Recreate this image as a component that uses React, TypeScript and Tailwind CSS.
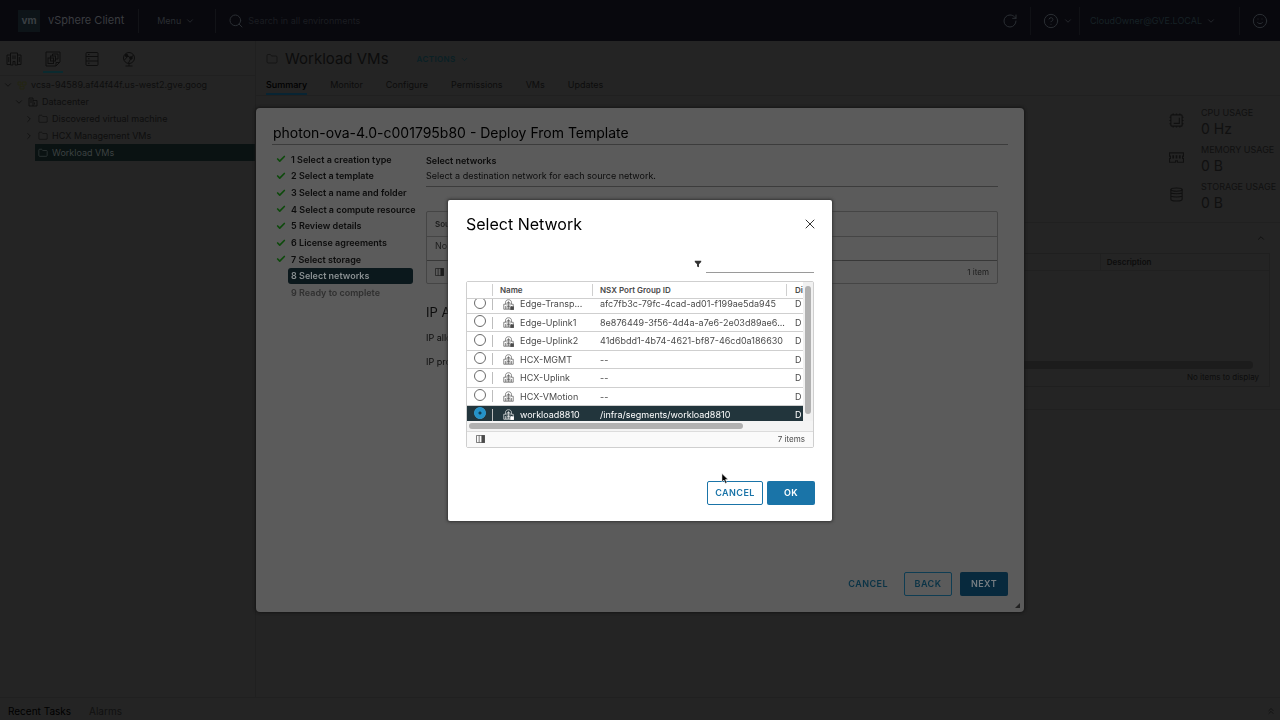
import { useLayoutEffect, useRef, useState } from "react";
import type { ReactNode } from "react";
import {
  Check,
  ChevronDown,
  ChevronRight,
  ChevronUp,
  ChevronsUp,
  CircleHelp,
  Folder,
  RotateCw,
  Search,
  Smile,
  X,
} from "lucide-react";

const steps = [
  "Select a creation type",
  "Select a template",
  "Select a name and folder",
  "Select a compute resource",
  "Review details",
  "License agreements",
  "Select storage",
  "Select networks",
  "Ready to complete",
];

const networks = [
  { name: "Edge-Transp...", id: "afc7fb3c-79fc-4cad-ad01-f199ae5da945", nsx: true },
  { name: "Edge-Uplink1", id: "8e876449-3f56-4d4a-a7e6-2e03d89ae6...", nsx: true },
  { name: "Edge-Uplink2", id: "41d6bdd1-4b74-4621-bf87-46cd0a186630", nsx: true },
  { name: "HCX-MGMT", id: "--", nsx: false },
  { name: "HCX-Uplink", id: "--", nsx: false },
  { name: "HCX-VMotion", id: "--", nsx: false },
  { name: "workload8810", id: "/infra/segments/workload8810", nsx: true },
];

const tabs = ["Summary", "Monitor", "Configure", "Permissions", "VMs", "Updates"];

function NetworkIcon({ nsx }: { nsx: boolean }) {
  return (
    <svg viewBox="0 0 22 22" className="size-[11px] shrink-0" fill="none" stroke="currentColor" strokeWidth="1.3" aria-hidden="true">
      <path d="M5 11V7C5 3.5 7.5 1.5 11 1.5S17 3.5 17 7V11" />
      <path d="M5 10.5H1.5V20.5H20.5V10.5H17" />
      <path d="M8 13V7.5H14V13M11 4.5V20M8 20V14.5H14V20M4.8 20V14M17.2 20V14" />
      {nsx && <path d="M15.5 15.5H21.5V21.5H15.5Z" fill="currentColor" />}
    </svg>
  );
}

function ColumnsIcon() {
  return (
    <svg viewBox="0 0 20 18" className="h-[8px] w-[9px]" fill="none" stroke="currentColor" strokeWidth="1.6" aria-hidden="true">
      <path d="M1 1H19V17H1ZM7 1V17" />
      <path d="M13 1H19V17H13Z" fill="currentColor" />
    </svg>
  );
}

function HostsIcon() {
  return (
    <svg viewBox="0 0 32 32" className="size-4" fill="none" stroke="currentColor" strokeWidth="2" aria-hidden="true">
      <path d="M9 4H23V28H18V21H14V28H9Z" />
      <path d="M9 8H2V27H9M23 8H30V27H23M5.5 12V22M26.5 12V22M14 9V16M18 9V16" />
    </svg>
  );
}

function VmsIcon() {
  return (
    <svg viewBox="0 0 32 32" className="size-4" fill="none" stroke="currentColor" strokeWidth="2" aria-hidden="true">
      <path d="M2 2H30V22L22 30H2Z" />
      <rect x="6" y="14" width="11" height="11" />
      <rect x="11" y="10" width="10" height="10" />
      <path d="M15 10V6H26V16H21M22 30V23H29" />
    </svg>
  );
}

function DatastoreIcon() {
  return (
    <svg viewBox="0 0 32 32" className="size-4" fill="none" stroke="currentColor" strokeWidth="2" aria-hidden="true">
      <rect x="4" y="3" width="24" height="26" rx="2" />
      <path d="M4 11H28M4 20H28M8 7H11M8 15.5H11M8 24.5H11" />
    </svg>
  );
}

function StorageIcon() {
  return (
    <svg viewBox="0 0 32 32" className="size-[15px]" fill="none" stroke="currentColor" strokeWidth="2.4" aria-hidden="true">
      <ellipse cx="16" cy="5.5" rx="12" ry="3.5" />
      <path d="M4 5.5V26C4 31 28 31 28 26V5.5M4 12.5C8 15 24 15 28 12.5M4 19.5C8 22 24 22 28 19.5" />
    </svg>
  );
}

function GlobeIcon() {
  return (
    <svg viewBox="0 0 32 32" className="size-4" fill="none" stroke="currentColor" strokeWidth="2" aria-hidden="true">
      <circle cx="16" cy="14" r="11" />
      <path d="M8 7L20 14L25 8M20 14L15 24M7 18L14 10M9 30H23M16 25V30" />
      <circle cx="20" cy="14" r="2.5" fill="currentColor" />
      <circle cx="11" cy="9" r="2.5" fill="currentColor" />
    </svg>
  );
}

function CpuIcon() {
  return (
    <svg viewBox="0 0 32 32" className="size-[15px]" fill="none" stroke="currentColor" strokeWidth="2.4" aria-hidden="true">
      <rect x="4" y="4" width="24" height="24" rx="2" />
      <path d="M22 10V22H10" />
      <path d="M9 1V4M16 1V4M23 1V4M9 28V31M16 28V31M23 28V31M1 9H4M1 16H4M1 23H4M28 9H31M28 16H31M28 23H31" />
    </svg>
  );
}

function MemoryIcon() {
  return (
    <svg viewBox="0 0 32 32" className="size-[15px]" fill="none" stroke="currentColor" strokeWidth="2.4" aria-hidden="true">
      <path d="M1 6H31V13H29V18H31V26H18V23H14V26H1V18H3V13H1Z" />
      <path d="M9 11V18M16 11V18M23 11V18" strokeWidth="3.5" />
    </svg>
  );
}

function TreeRow({ className, children }: { className: string; children: ReactNode }) {
  return <li className={`flex h-[17px] items-center gap-1 whitespace-nowrap ${className}`}>{children}</li>;
}

function TopBar() {
  return (
    <header className="flex h-[41px] shrink-0 items-center bg-[#08080d] text-[9px] text-[#2a2e33]">
      <div className="ml-[18px] grid size-[22px] place-items-center bg-[#0d1418] text-[10px] font-bold text-[#3a3f43]">vm</div>
      <span className="ml-2 text-[11px] text-[#3a3c40]">vSphere Client</span>
      <span className="ml-[14px] h-6 w-px bg-[#121317]" />
      <button type="button" className="ml-[18px] flex items-center gap-1">
        Menu <ChevronDown className="size-[10px]" />
      </button>
      <span className="ml-5 h-6 w-px bg-[#121317]" />
      <label className="ml-3 flex items-center gap-1">
        <Search className="size-4" strokeWidth={1.5} />
        <input
          aria-label="Search in all environments"
          placeholder="Search in all environments"
          className="w-40 bg-transparent outline-none placeholder:text-[#1b1d21]"
        />
      </label>
      <div className="ml-auto flex items-center">
        <button type="button" aria-label="Refresh">
          <RotateCw className="size-4" strokeWidth={1.5} />
        </button>
        <span className="mx-3 h-7 w-px bg-[#101115]" />
        <button type="button" aria-label="Help" className="flex items-center gap-1">
          <CircleHelp className="size-4" strokeWidth={1.5} />
          <ChevronDown className="size-[10px]" />
        </button>
        <span className="mx-[6px] h-7 w-px bg-[#101115]" />
        <button type="button" className="ml-1 flex items-center gap-1 text-[#172226]">
          CloudOwner@GVE.LOCAL <ChevronDown className="size-[10px] text-[#2a2e33]" />
        </button>
        <span className="mr-3 ml-[23px] h-7 w-px bg-[#101115]" />
        <button type="button" aria-label="Feedback" className="mr-3">
          <Smile className="size-4" strokeWidth={1.5} />
        </button>
      </div>
    </header>
  );
}

function Sidebar() {
  return (
    <aside className="w-[20vw] shrink-0 border-r border-[#202020] text-[#0e0e0e]">
      <nav aria-label="Inventory views" className="flex h-8 items-end gap-[21px] pl-[6px]">
        <button type="button" aria-label="Hosts" className="border-b-2 border-transparent pb-1">
          <HostsIcon />
        </button>
        <button type="button" aria-label="VMs" className="border-b-2 border-[#0b2a2f] px-[2px] pb-1">
          <VmsIcon />
        </button>
        <button type="button" aria-label="Storage" className="border-b-2 border-transparent pb-1">
          <DatastoreIcon />
        </button>
        <button type="button" aria-label="Networks" className="border-b-2 border-transparent pb-1">
          <GlobeIcon />
        </button>
      </nav>
      <ul className="mt-[2px] border-t border-[#202020] text-[9px]">
        <TreeRow className="pl-[3px]">
          <ChevronDown className="size-[10px]" />
          <VcIcon />
          vcsa-94589.af44f44f.us-west2.gve.goog
        </TreeRow>
        <TreeRow className="pl-[14px]">
          <ChevronDown className="size-[10px]" />
          <svg viewBox="0 0 20 20" className="size-[10px]" fill="none" stroke="currentColor" strokeWidth="1.6" aria-hidden="true">
            <path d="M2 2H10V18H2ZM10 7H18V18H10M4 6H8M4 10H8M13 11V15" />
          </svg>
          Datacenter
        </TreeRow>
        <TreeRow className="pl-6">
          <ChevronRight className="size-[10px]" />
          <Folder className="size-[10px]" strokeWidth={1.5} />
          Discovered virtual machine
        </TreeRow>
        <TreeRow className="pl-6">
          <ChevronRight className="size-[10px]" />
          <Folder className="size-[10px]" strokeWidth={1.5} />
          HCX Management VMs
        </TreeRow>
        <TreeRow className="ml-[35px] bg-[#0a1212] pl-[3px] text-[#3c4141]">
          <Folder className="size-[10px]" strokeWidth={1.5} />
          Workload VMs
        </TreeRow>
      </ul>
    </aside>
  );
}

function VcIcon() {
  return (
    <svg viewBox="0 0 20 20" className="size-[10px] text-[#25260f]" fill="none" stroke="currentColor" strokeWidth="1.6" aria-hidden="true">
      <path d="M2 4H8V10H2ZM11 4H18V10H11ZM6 13H14V18H6Z" />
    </svg>
  );
}

function Usage({ icon, label, value }: { icon: ReactNode; label: string; value: string }) {
  return (
    <div className="flex h-[37px] gap-[17px]">
      <span className="mt-[6px]">{icon}</span>
      <dl>
        <dt className="text-[9px] leading-3 whitespace-nowrap">{label}</dt>
        <dd className="text-[14px] leading-5">{value}</dd>
      </dl>
    </div>
  );
}

function Main() {
  return (
    <main className="flex min-w-0 flex-1 flex-col text-[#0c0c0c]">
      <div className="flex h-9 items-center pl-[10px]">
        <Folder className="size-3 text-[#101010]" strokeWidth={1.5} />
        <h1 className="ml-[7px] text-[15px] text-[#0c0c0c]">Workload VMs</h1>
        <button type="button" className="ml-7 flex items-center gap-1 text-[8px] font-semibold tracking-wider text-[#0a2024]">
          ACTIONS <ChevronDown className="size-[9px]" />
        </button>
      </div>
      <nav aria-label="Object tabs" className="flex h-[19px] gap-[23px] border-b border-[#202020] pl-[10px] text-[9px]">
        {tabs.map((tab) => (
          <button
            key={tab}
            type="button"
            className={tab === "Summary" ? "border-b-2 border-[#082433] font-medium text-black" : "border-b-2 border-transparent"}
          >
            {tab}
          </button>
        ))}
      </nav>
      <section className="flex h-[127px] flex-col items-end border-b border-[#202020] pt-[11px]">
        <div className="w-[111px] text-[#101010]">
          <Usage icon={<CpuIcon />} label="CPU USAGE" value="0 Hz" />
          <Usage icon={<MemoryIcon />} label="MEMORY USAGE" value="0 B" />
          <Usage icon={<StorageIcon />} label="STORAGE USAGE" value="0 B" />
        </div>
      </section>
      <section className="border-b border-[#202020] pr-[10px] pb-[22px] text-[8px]">
        <div className="flex h-[30px] items-center justify-end pr-1">
          <button type="button" aria-label="Collapse">
            <ChevronUp className="size-[10px]" />
          </button>
        </div>
        <div className="border border-[#1f1f1f]">
          <table className="w-full text-left">
            <thead className="border-b border-[#202020]">
              <tr className="h-4">
                <th className="w-5/6" aria-label="Attribute" />
                <th className="border-l border-[#202020] pl-[6px] font-semibold">Description</th>
              </tr>
            </thead>
          </table>
          <div className="flex h-[98px] items-end pr-4">
            <div className="h-2 w-full rounded-full bg-[#1c1c1c]" />
          </div>
          <p className="pr-[10px] text-right leading-[17px]">No items to display</p>
        </div>
      </section>
    </main>
  );
}

function DeployWizard() {
  return (
    <div role="dialog" aria-labelledby="deploy-title" className="relative flex min-h-[70vh] w-[60vw] flex-col rounded bg-[#5b5b5b] px-4 pb-4 text-[#0c0c0c] shadow-[0_0_3px_1px_#161616]">
      <h2 id="deploy-title" className="mt-[14px] border-b border-[#3c3c3c] pl-px text-[14px] leading-[22px] text-black">
        photon-ova-4.0-c001795b80 - Deploy From Template
      </h2>
      <div className="flex flex-1 pt-[6px]">
        <ol className="grid h-[150px] w-[141px] shrink-0 auto-rows-fr grid-cols-[minmax(0,1fr)] text-[9px] font-semibold whitespace-nowrap">
          {steps.map((step, i) => (
            <li key={step} className="flex items-center pl-1">
              <span className="w-3 shrink-0">{i < 7 && <Check className="size-[10px] text-[#0d4a0b]" strokeWidth={4} />}</span>
              <span
                className={
                  i === 7
                    ? "flex h-4 flex-1 items-center rounded-[3px] bg-[#0b181c] pl-[3px] text-[#8a9092]"
                    : i === 8
                      ? "pl-[3px] text-[#303030]"
                      : "pl-[3px]"
                }
              >
                {i + 1} {step}
              </span>
            </li>
          ))}
        </ol>
        <section className="ml-[13px] mr-[10px] flex-1 pt-[2px] text-[9px]">
          <header className="border-b border-[#3c3c3c] pb-[3px] leading-[15px]">
            <h3 className="font-semibold">Select networks</h3>
            <p>Select a destination network for each source network.</p>
          </header>
          <div className="mt-6 rounded-[2px] border border-[#454545] text-[#1c1c1c]">
            <table className="w-full text-left">
              <thead>
                <tr className="h-6 border-b border-[#454545] text-[8px]">
                  <th className="pl-2 font-semibold">Source Network</th>
                </tr>
              </thead>
              <tbody>
                <tr className="h-6 border-b border-[#383838]">
                  <td className="pt-[2px] pl-2 align-top">None</td>
                </tr>
              </tbody>
            </table>
            <div className="flex h-[22px] items-center justify-between px-2 text-[8px]">
              <ColumnsIcon />
              <span>1 item</span>
            </div>
          </div>
          <h3 className="mt-[18px] text-[13px] leading-5">IP Allocation Settings</h3>
          <dl className="mt-1 leading-6">
            <dt>IP allocation</dt>
            <dt>IP protocol</dt>
          </dl>
        </section>
      </div>
      <div className="flex items-center justify-end gap-2 text-[9px] font-semibold tracking-wider text-[#0a3346]">
        <button type="button" className="mr-2 h-6">
          CANCEL
        </button>
        <button type="button" className="h-6 w-12 rounded-[2px] border border-[#0f3d53]">
          BACK
        </button>
        <button type="button" className="h-6 w-12 rounded-[2px] bg-[#07293d] text-[#767d82]">
          NEXT
        </button>
      </div>
      <svg viewBox="0 0 6 6" className="absolute right-1 bottom-1 size-[5px]" aria-hidden="true">
        <path d="M6 0V6H0Z" fill="#222222" />
      </svg>
    </div>
  );
}

function NetworkTable() {
  const [selected, setSelected] = useState("workload8810");
  const viewport = useRef<HTMLDivElement>(null);

  useLayoutEffect(() => {
    if (viewport.current) viewport.current.scrollTop = 3;
  }, []);

  return (
    <div className="rounded-[2px] border border-[#cfcfcf] text-[9px] text-[#4a4a4a]">
      <div className="flex bg-[#f1f1f1]">
        <div ref={viewport} className="h-[139px] min-w-0 flex-1 overflow-hidden bg-white">
          <table className="h-[146px] w-full table-fixed border-separate border-spacing-0 text-left whitespace-nowrap">
            <colgroup>
              <col className="w-[26px]" />
              <col className="w-[100px]" />
              <col className="w-[194px]" />
              <col />
            </colgroup>
            <thead className="sticky top-0 z-10 bg-white text-[8px]">
              <tr>
                <th className="h-[17px] border-b border-[#cfcfcf] p-0" aria-label="Selection">
                  <span className="ml-auto block h-3 w-px bg-[#cfcfcf]" />
                </th>
                <th className="border-b border-[#cfcfcf] p-0 font-semibold">
                  <span className="flex h-3 items-center border-r border-[#cfcfcf] pl-[7px]">Name</span>
                </th>
                <th className="border-b border-[#cfcfcf] p-0 font-semibold">
                  <span className="flex h-3 items-center border-r border-[#cfcfcf] pl-[7px]">NSX Port Group ID</span>
                </th>
                <th className="overflow-hidden border-b border-[#cfcfcf] p-0 pl-2 font-semibold">Di</th>
              </tr>
            </thead>
            <tbody>
              {networks.map((n) => {
                const on = n.name === selected;
                return (
                  <tr key={n.name} className={on ? "bg-[#22353c] text-white" : "bg-white"}>
                    <td className="h-[18px] border-b border-[#cfcfcf] p-0">
                      <span className="flex items-center">
                        <input
                          type="radio"
                          name="network"
                          aria-label={n.name}
                          checked={on}
                          onChange={() => setSelected(n.name)}
                          className="mb-[3px] ml-[7px] size-3 appearance-none rounded-full border border-[#6a6a6a] bg-white checked:border-[#2492c8] checked:bg-[radial-gradient(circle,#123e55_1px,#2492c8_2px)]"
                        />
                        <span className="ml-auto h-3 w-px bg-[#bdbdbd]" />
                      </span>
                    </td>
                    <td className="border-b border-[#cfcfcf] p-0">
                      <span className="flex items-center gap-[6px] pl-[10px]">
                        <NetworkIcon nsx={n.nsx} />
                        {n.name}
                      </span>
                    </td>
                    <td className="border-b border-[#cfcfcf] p-0 pl-[7px]">{n.id}</td>
                    <td className="overflow-hidden border-b border-[#cfcfcf] p-0 pl-2">D</td>
                  </tr>
                );
              })}
            </tbody>
          </table>
        </div>
        <div className="w-[10px] pt-1">
          <div className="mx-auto h-32 w-[6px] rounded-full bg-[#b1b1b1]" />
        </div>
      </div>
      <div className="h-[11px] border-b border-[#dcdcdc] bg-[#f4f4f4] px-[2px] pt-[2px]">
        <div className="h-[6px] w-4/5 rounded-full bg-[#b1b1b1]" />
      </div>
      <div className="flex h-[15px] items-center justify-between bg-[#fafafa] px-2 text-[8px]">
        <button type="button" aria-label="Manage columns" className="ml-px">
          <ColumnsIcon />
        </button>
        <span>7 items</span>
      </div>
    </div>
  );
}

function SelectNetworkDialog() {
  return (
    <div role="dialog" aria-modal="true" aria-labelledby="network-title" className="relative w-[30vw] min-w-[384px] rounded-[2px] bg-white px-[18px] pt-3 pb-4 shadow-[0_0_3px_1px_#333333]">
      <header className="flex h-6 items-center justify-between">
        <h2 id="network-title" className="text-[16px] text-black">
          Select Network
        </h2>
        <button type="button" aria-label="Close" className="-mr-1 text-[#333333]">
          <X className="size-4" strokeWidth={1.5} />
        </button>
      </header>
      <label className="mt-[19px] mb-2 flex items-center justify-end gap-1">
        <svg viewBox="0 0 10 10" className="size-2 text-[#333333]" fill="currentColor" aria-hidden="true">
          <path d="M1 1H9V2.4L6.2 5.4V9.2L3.8 8V5.4L1 2.4Z" />
        </svg>
        <input aria-label="Filter networks" className="h-[18px] w-[108px] border-b border-[#9a9a9a] text-[9px] outline-none" />
      </label>
      <NetworkTable />
      <div className="mt-[33px] -mr-px flex justify-end gap-1 text-[9px] font-semibold tracking-wider">
        <button type="button" className="h-6 w-14 rounded-[2px] border border-[#1a74a8] text-[#1a74a8]">
          CANCEL
        </button>
        <button type="button" className="h-6 w-12 rounded-[2px] bg-[#1a74a8] text-white">
          OK
        </button>
      </div>
      <svg viewBox="0 0 12 18" className="absolute right-[103px] bottom-[37px] h-[11px] w-[8px]" aria-hidden="true">
        <path d="M1 1V14.5L4.3 11.6L6.6 17L9 16L6.7 10.8H11Z" fill="#000000" stroke="#ffffff" strokeWidth="0.8" />
      </svg>
    </div>
  );
}

export default function App() {
  return (
    <div className="flex min-h-screen flex-col bg-[#242424] font-['Inter',sans-serif]">
      <TopBar />
      <div className="flex flex-1">
        <Sidebar />
        <Main />
      </div>
      <footer className="flex h-[23px] items-center gap-[18px] border-t border-[#202020] pr-1 pl-2 pt-1 text-[10px] text-[#101010]">
        <button type="button" className="text-black">
          Recent Tasks
        </button>
        <button type="button">Alarms</button>
        <button type="button" aria-label="Expand panel" className="ml-auto">
          <ChevronsUp className="size-[10px]" />
        </button>
      </footer>
      <div className="fixed inset-0 grid place-items-center">
        <DeployWizard />
      </div>
      <div className="fixed inset-0 grid place-items-center">
        <SelectNetworkDialog />
      </div>
    </div>
  );
}
